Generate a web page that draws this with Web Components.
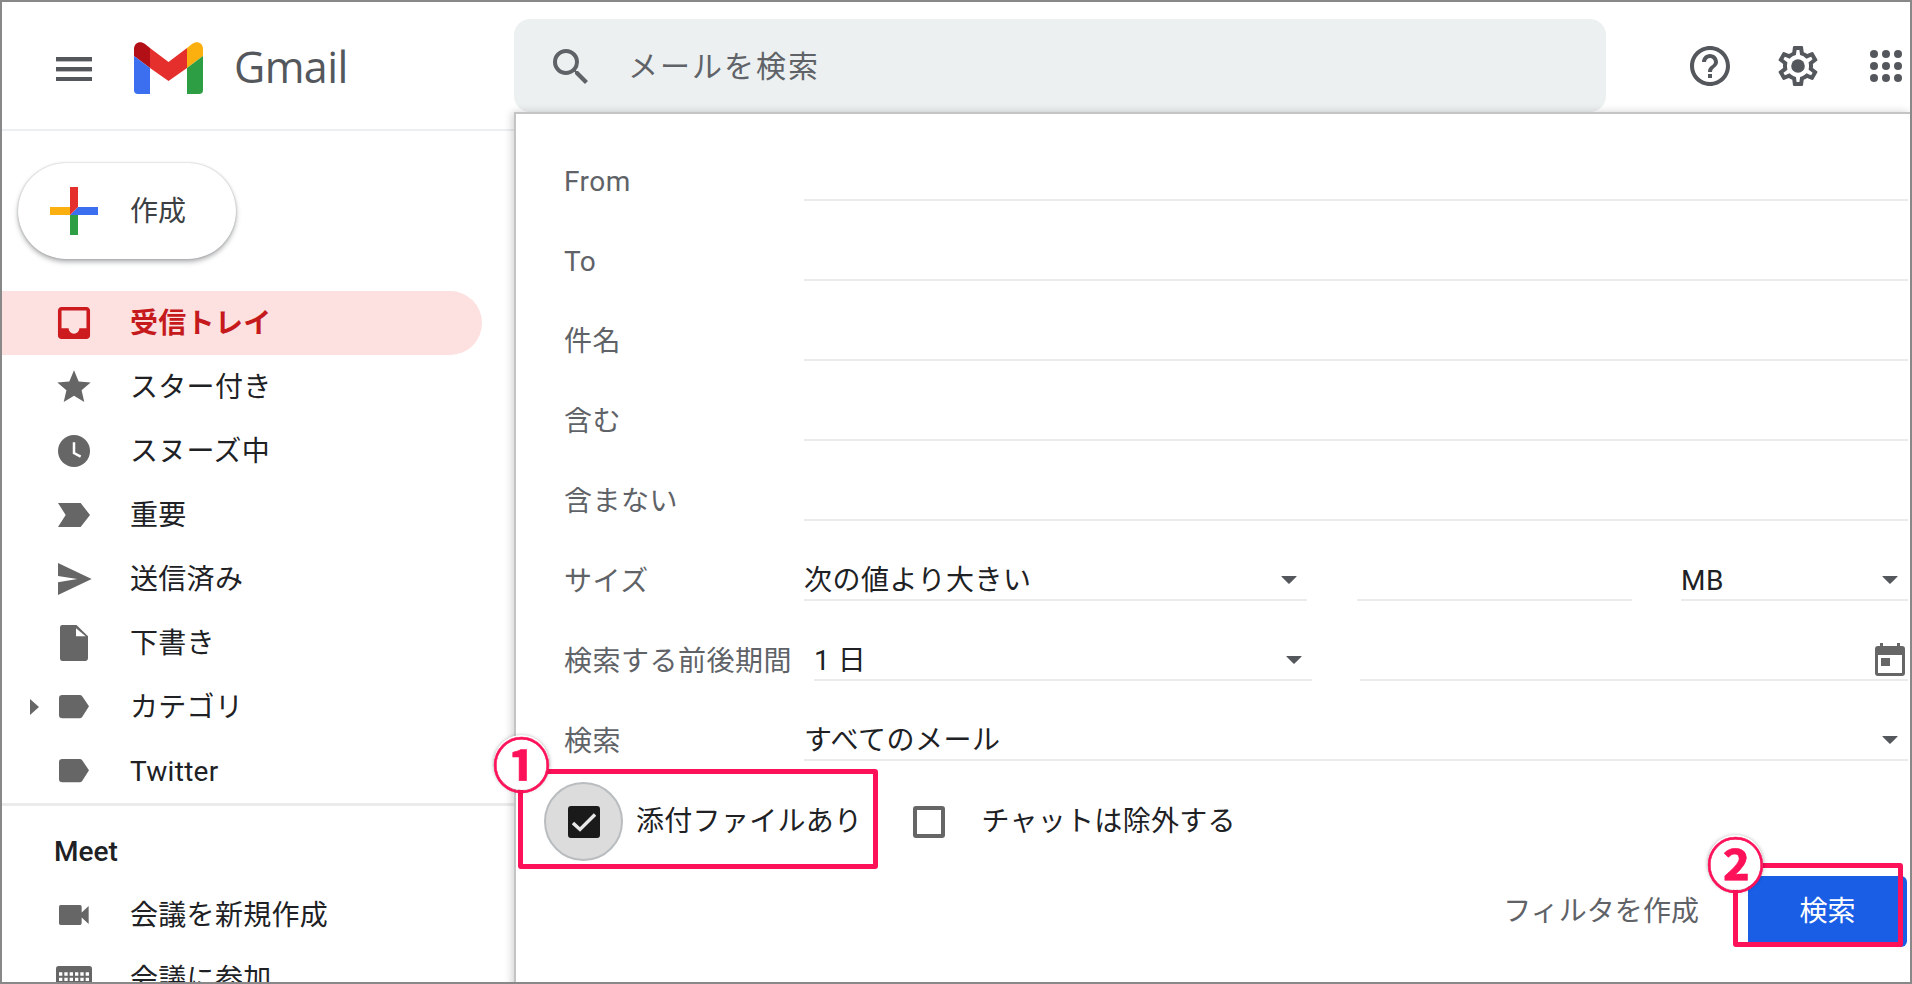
<!DOCTYPE html>
<html lang="ja">
<head>
<meta charset="utf-8">
<title>Gmail</title>
<style>
  html, body { margin: 0; height: 100%; overflow: hidden; background: #fff; }
</style>
</head>
<body>
<gm-app>
  <gm-sidebar slot="side">
    <gm-brand></gm-brand>
    <gm-compose>作成</gm-compose>
    <gm-nav-item icon="inbox" active>受信トレイ</gm-nav-item>
    <gm-nav-item icon="star">スター付き</gm-nav-item>
    <gm-nav-item icon="clock">スヌーズ中</gm-nav-item>
    <gm-nav-item icon="important">重要</gm-nav-item>
    <gm-nav-item icon="sent">送信済み</gm-nav-item>
    <gm-nav-item icon="draft">下書き</gm-nav-item>
    <gm-nav-item icon="label" caret>カテゴリ</gm-nav-item>
    <gm-nav-item icon="label">Twitter</gm-nav-item>
    <gm-meet-head>Meet</gm-meet-head>
    <gm-nav-item icon="video">会議を新規作成</gm-nav-item>
    <gm-nav-item icon="keyboard">会議に参加</gm-nav-item>
  </gm-sidebar>
  <gm-topbar slot="top"></gm-topbar>
  <gm-search-dialog slot="top">
    <gm-row label="From"><gm-field></gm-field></gm-row>
    <gm-row label="To"><gm-field></gm-field></gm-row>
    <gm-row label="件名"><gm-field></gm-field></gm-row>
    <gm-row label="含む"><gm-field></gm-field></gm-row>
    <gm-row label="含まない"><gm-field></gm-field></gm-row>
    <gm-row label="サイズ">
      <gm-field select style="width:503px">次の値より大きい</gm-field>
      <gm-field style="width:275px;margin-left:50px"></gm-field>
      <gm-field select style="width:227px;margin-left:49px">MB</gm-field>
    </gm-row>
    <gm-row label="検索する前後期間">
      <gm-field select style="width:498px;margin-left:10px">1 日</gm-field>
      <gm-field calendar style="width:548px;margin-left:48px"></gm-field>
    </gm-row>
    <gm-row label="検索"><gm-field select>すべてのメール</gm-field></gm-row>
    <gm-check-row>
      <gm-check checked>添付ファイルあり</gm-check>
      <gm-check style="margin-left:51px">チャットは除外する</gm-check>
    </gm-check-row>
    <gm-actions></gm-actions>
  </gm-search-dialog>
  <gm-mark slot="over" style="left:516px;top:767px;width:360px;height:100px"></gm-mark>
  <gm-badge slot="over" style="left:492px;top:733px">①</gm-badge>
  <gm-mark slot="over" style="left:1731px;top:861px;width:170px;height:84px"></gm-mark>
  <gm-badge slot="over" style="left:1706px;top:833px">②</gm-badge>
</gm-app>

<script>
"use strict";

(() => {
  const ICONS = {
    inbox: `<path transform="translate(12 12) scale(1.07) translate(-12 -12)" d="M19 3H5c-1.1 0-2 .9-2 2v14c0 1.1.9 2 2 2h14c1.1 0 2-.9 2-2V5c0-1.1-.9-2-2-2zm0 12h-4c0 1.66-1.35 3-3 3s-3-1.34-3-3H5V5h14v10z"/>`,
    star: `<path d="M12 17.27L18.18 21l-1.64-7.03L22 9.24l-7.19-.61L12 2 9.19 8.63 2 9.24l5.46 4.73L5.82 21z"/>`,
    clock: `<circle cx="12" cy="12" r="9.6"/><path d="M12 6.8v6.4l4 2.2" fill="none" stroke="#fff" stroke-width="1.5"/>`,
    important: `<path d="M2.4 4.8H16L21.6 12 16 19.2H2.4L7 12z"/>`,
    sent: `<path d="M2.4 2.4L22.6 12 2.4 21.6v-7.6L14 12 2.4 10.2z"/>`,
    draft: `<path d="M5 1.2h8.5L20.4 8v13.2c0 .9-.7 1.6-1.6 1.6H5c-.9 0-1.4-.7-1.4-1.6V2.8c0-.9.5-1.6 1.4-1.6z"/><path d="M13.2 3.2L19 8h-5.8z" fill="#fff"/>`,
    label: `<path d="M5 4.8h10.5q.8 0 1.3.6l4.2 6.2-4.2 6.6q-.5.6-1.3.6H5q-2 0-2-2V6.8q0-2 2-2z"/>`,
    video: `<path d="M4 6h11.6a1 1 0 0 1 1 1v3.5l4.2-3.9v10.8l-4.2-3.9V17a1 1 0 0 1-1 1H4a1 1 0 0 1-1-1V7a1 1 0 0 1 1-1z"/>`,
    keyboard: `<rect x="1.2" y="4.2" width="21.6" height="15.6" rx="1.6"/><path fill="#fff" d="M3 8h2v2H3zM6.2 8h2v2h-2zM9.4 8h2v2h-2zM12.6 8h2v2h-2zM15.8 8h2v2h-2zM19 8h2v2h-2zM3 11.2h2v2H3zM6.2 11.2h2v2h-2zM9.4 11.2h2v2h-2zM12.6 11.2h2v2h-2zM15.8 11.2h2v2h-2zM19 11.2h2v2h-2zM7 15h10v2H7z"/>`,
  };

  customElements.define("gm-app", class extends HTMLElement {
    constructor() {
      super();
      this.attachShadow({mode: "open"}).innerHTML = `
        <style>
          :host {
            display: grid;
            grid-template-columns: 512px 1fr;
            position: relative;
            box-sizing: border-box;
            width: 1912px;
            height: 984px;
            border: 2px solid #888;
            overflow: hidden;
            background: #fff;
            color: #202124;
            font-family: Roboto, "Noto Sans CJK JP", sans-serif;
            font-size: 28px;
            line-height: 36px;
          }
          #side, #main { min-width: 0; display: flex; flex-direction: column; }
        </style>
        <div id="side"><slot name="side"></slot></div>
        <div id="main"><slot name="top"></slot></div>
        <slot name="over"></slot>
      `;
    }
  });

  customElements.define("gm-sidebar", class extends HTMLElement {
    constructor() {
      super();
      this.attachShadow({mode: "open"}).innerHTML = `
        <style>
          :host { display: block; height: 100%; overflow: hidden; }
        </style>
        <slot></slot>
      `;
    }
  });

  customElements.define("gm-brand", class extends HTMLElement {
    constructor() {
      super();
      this.attachShadow({mode: "open"}).innerHTML = `
        <style>
          :host {
            display: flex;
            align-items: center;
            height: 127px;
            border-bottom: 2px solid #eceff1;
            padding-left: 54px;
          }
          #menu { width: 36px; height: 24px; margin-right: 42px; margin-top: 6px; display: block; }
          #logo { width: 69px; height: 52px; margin-right: 31px; margin-top: 5px; display: block; }
          #name {
            color: #54575c;
            font-family: "Open Sans", sans-serif;
            font-size: 43px;
            letter-spacing: -.6px;
            line-height: 52px;
            margin-top: 3px;
          }
        </style>
        <svg id="menu" viewBox="0 0 36 24" fill="#54575c">
          <rect width="36" height="4.4"/><rect y="10" width="36" height="4.4"/><rect y="20" width="36" height="4.4"/>
        </svg>
        <svg id="logo" viewBox="0 0 69 52">
          <path fill="#e52f2c" d="M16 6l18.5 14L53 6v20L34.5 39 16 26z"/>
          <path fill="#b30f17" d="M16 6v20L0 14V7C0 1 6-2 11 2z"/>
          <path fill="#fbb010" d="M53 6v20l16-12V7c0-6-6-9-11-5z"/>
          <path fill="#3b6ff0" d="M0 14l16 12v26H4q-4 0-4-4z"/>
          <path fill="#2e9e45" d="M69 14L53 26v26h12q4 0 4-4z"/>
        </svg>
        <span id="name">Gmail</span>
      `;
    }
  });

  customElements.define("gm-compose", class extends HTMLElement {
    constructor() {
      super();
      this.attachShadow({mode: "open"}).innerHTML = `
        <style>
          :host {
            display: flex;
            align-items: center;
            box-sizing: border-box;
            width: 218px;
            height: 96px;
            margin: 32px 0 32px 16px;
            padding-left: 32px;
            border-radius: 48px;
            background: #fff;
            box-shadow: 0 0 2px rgba(60,64,67,.35), 0 3px 5px rgba(60,64,67,.4);
            color: #3c4043;
          }
          svg { width: 48px; height: 48px; margin-right: 32px; display: block; }
          span { padding-top: 2px; }
        </style>
        <svg viewBox="0 0 48 48">
          <path fill="#fbb010" d="M0 20h20v8H0z"/>
          <path fill="#2e9e45" d="M20 28h8v20h-8z"/>
          <path fill="#3b6ff0" d="M28 20h20v8H20z"/>
          <path fill="#e52f2c" d="M20 0h8v20l-8 8z"/>
        </svg>
        <span><slot></slot></span>
      `;
    }
  });

  customElements.define("gm-nav-item", class extends HTMLElement {
    constructor() {
      super();
      this.attachShadow({mode: "open"}).innerHTML = `
        <style>
          :host {
            display: flex;
            align-items: center;
            box-sizing: border-box;
            width: 480px;
            height: 64px;
            padding-left: 28px;
            border-radius: 0 32px 32px 0;
            letter-spacing: .3px;
            flex: none;
          }
          :host([active]) { background: #fde0e0; color: #c5191c; font-weight: 700; }
          #caret { width: 24px; height: 16px; flex: none; display: block; }
          #icon { width: 40px; height: 40px; margin-right: 36px; flex: none; display: block; fill: #666; }
          :host([active]) #icon { fill: #cc1a1e; }
          #text { padding-top: 2px; }
        </style>
        <svg id="caret" viewBox="0 0 24 16"></svg>
        <svg id="icon" viewBox="0 0 24 24"></svg>
        <span id="text"><slot></slot></span>
      `;
    }

    connectedCallback() {
      this.shadowRoot.getElementById("icon").innerHTML = ICONS[this.getAttribute("icon")] || "";
      if (this.hasAttribute("caret")) {
        this.shadowRoot.getElementById("caret").innerHTML = `<path fill="#666" d="M0 0l9 8-9 8z"/>`;
      }
    }
  });

  customElements.define("gm-meet-head", class extends HTMLElement {
    constructor() {
      super();
      this.attachShadow({mode: "open"}).innerHTML = `
        <style>
          :host {
            display: flex;
            align-items: center;
            height: 63px;
            padding: 14px 0 0 52px;
            border-top: 3px solid #ebebeb;
            font-weight: 500;
            font-size: 28px;
          }
        </style>
        <slot></slot>
      `;
    }
  });

  customElements.define("gm-topbar", class extends HTMLElement {
    constructor() {
      super();
      this.attachShadow({mode: "open"}).innerHTML = `
        <style>
          :host {
            display: flex;
            align-items: flex-start;
            height: 110px;
            box-sizing: border-box;
            padding-top: 17px;
            flex: none;
          }
          #box {
            display: flex;
            align-items: center;
            box-sizing: border-box;
            width: 1092px;
            height: 93px;
            padding: 2px 0 0 33px;
            border-radius: 16px;
            background: #ecf0f1;
            color: #5f6368;
            font-size: 30px;
            letter-spacing: 2px;
          }
          #box svg { width: 48px; height: 48px; fill: #5f6368; margin-right: 33px; display: block; }
          #icons { display: flex; gap: 40px; margin: 23px 0 0 80px; }
          #icons svg { width: 48px; height: 48px; fill: #54575c; display: block; }
        </style>
        <div id="box">
          <svg viewBox="0 0 24 24"><path d="M15.5 14h-.79l-.28-.27A6.47 6.47 0 0 0 16 9.5 6.5 6.5 0 1 0 9.5 16c1.61 0 3.09-.59 4.23-1.57l.27.28v.79l5 4.99L20.49 19l-4.99-5zm-6 0C7.01 14 5 11.99 5 9.5S7.01 5 9.5 5 14 7.01 14 9.5 11.99 14 9.5 14z"/></svg>
          <span>メールを検索</span>
        </div>
        <div id="icons">
          <svg viewBox="0 0 24 24"><path d="M11 18h2v-2h-2v2zm1-16C6.48 2 2 6.48 2 12s4.48 10 10 10 10-4.48 10-10S17.52 2 12 2zm0 18c-4.41 0-8-3.59-8-8s3.59-8 8-8 8 3.59 8 8-3.59 8-8 8zm0-14c-2.21 0-4 1.79-4 4h2c0-1.1.9-2 2-2s2 .9 2 2c0 2-3 1.75-3 5h2c0-2.25 3-2.5 3-5 0-2.21-1.79-4-4-4z"/></svg>
          <svg viewBox="0 0 24 24"><path d="M19.43 12.98c.04-.32.07-.64.07-.98 0-.34-.03-.66-.07-.98l2.11-1.65c.19-.15.24-.42.12-.64l-2-3.46c-.09-.16-.26-.25-.44-.25-.06 0-.12.01-.17.03l-2.49 1c-.52-.4-1.08-.73-1.69-.98l-.38-2.65C14.46 2.18 14.25 2 14 2h-4c-.25 0-.46.18-.49.42l-.38 2.65c-.61.25-1.17.59-1.69.98l-2.49-1c-.06-.02-.12-.03-.18-.03-.17 0-.34.09-.43.25l-2 3.46c-.13.22-.07.49.12.64l2.11 1.65c-.04.32-.07.65-.07.98 0 .33.03.66.07.98l-2.11 1.65c-.19.15-.24.42-.12.64l2 3.46c.09.16.26.25.44.25.06 0 .12-.01.17-.03l2.49-1c.52.4 1.08.73 1.69.98l.38 2.65c.03.24.24.42.49.42h4c.25 0 .46-.18.49-.42l.38-2.65c.61-.25 1.17-.59 1.69-.98l2.49 1c.06.02.12.03.18.03.17 0 .34-.09.43-.25l2-3.46c.12-.22.07-.49-.12-.64l-2.11-1.65zm-1.98-1.71c.04.31.05.52.05.73 0 .21-.02.43-.05.73l-.14 1.13.89.7 1.08.84-.7 1.21-1.27-.51-1.04-.42-.9.68c-.43.32-.84.56-1.25.73l-1.06.43-.16 1.13-.2 1.35h-1.4l-.19-1.35-.16-1.13-1.06-.43c-.43-.18-.83-.41-1.23-.71l-.91-.7-1.06.43-1.27.51-.7-1.21 1.08-.84.89-.7-.14-1.13c-.03-.31-.05-.54-.05-.74s.02-.43.05-.73l.14-1.13-.89-.7-1.08-.84.7-1.21 1.27.51 1.04.42.9-.68c.43-.32.84-.56 1.25-.73l1.06-.43.16-1.13.2-1.35h1.39l.19 1.35.16 1.13 1.06.43c.43.18.83.41 1.23.71l.91.7 1.06-.43 1.27-.51.7 1.21-1.07.85-.89.7.14 1.13z"/><circle cx="12" cy="12" r="3.4"/></svg>
          <svg viewBox="0 0 24 24"><circle cx="6" cy="6" r="2"/><circle cx="12" cy="6" r="2"/><circle cx="18" cy="6" r="2"/><circle cx="6" cy="12" r="2"/><circle cx="12" cy="12" r="2"/><circle cx="18" cy="12" r="2"/><circle cx="6" cy="18" r="2"/><circle cx="12" cy="18" r="2"/><circle cx="18" cy="18" r="2"/></svg>
        </div>
      `;
    }
  });

  customElements.define("gm-search-dialog", class extends HTMLElement {
    constructor() {
      super();
      this.attachShadow({mode: "open"}).innerHTML = `
        <style>
          :host {
            display: block;
            flex: 1;
            box-sizing: border-box;
            padding: 7px 2px 0 0;
            border-top: 2px solid #c4c4c4;
            border-left: 2px solid #c4c4c4;
            background: #fff;
            box-shadow: -2px 0 8px rgba(0,0,0,.18);
            position: relative;
          }
        </style>
        <slot></slot>
      `;
    }
  });

  customElements.define("gm-row", class extends HTMLElement {
    constructor() {
      super();
      this.attachShadow({mode: "open"}).innerHTML = `
        <style>
          :host {
            display: flex;
            align-items: flex-end;
            height: 80px;
            box-sizing: border-box;
            padding-left: 48px;
          }
          #label {
            width: 240px;
            flex: none;
            color: #5f6368;
            letter-spacing: .5px;
            white-space: nowrap;
            padding-bottom: 1px;
          }
          #fields { flex: 1; display: flex; align-items: flex-end; min-width: 0; }
        </style>
        <div id="label"></div>
        <div id="fields"><slot></slot></div>
      `;
    }

    connectedCallback() {
      this.shadowRoot.getElementById("label").textContent = this.getAttribute("label");
    }
  });

  customElements.define("gm-field", class extends HTMLElement {
    constructor() {
      super();
      this.attachShadow({mode: "open"}).innerHTML = `
        <style>
          :host {
            display: flex;
            align-items: center;
            flex: 1 1 auto;
            box-sizing: border-box;
            height: 38px;
            border-bottom: 2px solid #ebebeb;
            white-space: nowrap;
            letter-spacing: .5px;
          }
          :host([style*="width"]) { flex: none; }
          #text { flex: 1; }
          #arrow { width: 16px; height: 8px; margin: 0 10px 2px 0; display: none; fill: #54575c; }
          :host([select]) #arrow { display: block; }
          #cal { width: 30px; height: 33px; margin: 0 3px 3px 0; align-self: flex-end; display: none; }
          :host([calendar]) #cal { display: block; }
        </style>
        <span id="text"><slot></slot></span>
        <svg id="arrow" viewBox="0 0 16 8"><path d="M1 0h14q1 0 .4.7L8.6 7.6q-.6.5-1.2 0L.6.7Q0 0 1 0z"/></svg>
        <svg id="cal" viewBox="0 0 30 33">
          <path fill="#666" d="M5 0h3v3h14V0h3v3h2q3 0 3 3v24q0 3-3 3H3q-3 0-3-3V6q0-3 3-3h2zM3 12v18h24V12z"/>
          <rect fill="#666" x="6" y="15" width="9" height="8"/>
        </svg>
      `;
    }
  });

  customElements.define("gm-check-row", class extends HTMLElement {
    constructor() {
      super();
      this.attachShadow({mode: "open"}).innerHTML = `
        <style>
          :host {
            display: flex;
            align-items: center;
            height: 79px;
            margin-top: 21px;
            padding-left: 28px;
          }
        </style>
        <slot></slot>
      `;
    }
  });

  customElements.define("gm-check", class extends HTMLElement {
    constructor() {
      super();
      this.attachShadow({mode: "open"}).innerHTML = `
        <style>
          :host { display: flex; align-items: center; white-space: nowrap; letter-spacing: .3px; }
          #ripple {
            display: flex;
            align-items: center;
            justify-content: center;
            box-sizing: border-box;
          }
          :host([checked]) #ripple {
            width: 79px;
            height: 79px;
            margin-right: 13px;
            border: 2px solid #b9bdc0;
            border-radius: 50%;
            background: #dcdcdc;
          }
          :host(:not([checked])) #ripple { margin-right: 36px; }
          #box {
            box-sizing: border-box;
            width: 32px;
            height: 32px;
            border: 4px solid #666;
            border-radius: 3px;
            display: block;
          }
          :host([checked]) #box { background: #1a1a1a; border-color: #1a1a1a; }
          svg { width: 24px; height: 24px; display: none; }
          :host([checked]) svg { display: block; }
        </style>
        <div id="ripple"><div id="box"><svg viewBox="0 0 24 24"><path d="M1 13l7 6.5L23 4.5" fill="none" stroke="#e8e8e8" stroke-width="3.4"/></svg></div></div>
        <slot></slot>
      `;
    }
  });

  customElements.define("gm-actions", class extends HTMLElement {
    constructor() {
      super();
      this.attachShadow({mode: "open"}).innerHTML = `
        <style>
          :host {
            display: flex;
            align-items: center;
            justify-content: flex-end;
            margin-top: 15px;
            padding-right: 1px;
          }
          #filter { color: #5f6368; letter-spacing: .05px; margin-right: 49px; }
          #go {
            display: flex;
            align-items: center;
            justify-content: center;
            width: 159px;
            height: 71px;
            border-radius: 6px;
            background: #1a5ee5;
            color: #fff;
          }
        </style>
        <span id="filter">フィルタを作成</span>
        <div id="go">検索</div>
      `;
    }
  });

  customElements.define("gm-mark", class extends HTMLElement {
    constructor() {
      super();
      this.attachShadow({mode: "open"}).innerHTML = `
        <style>
          :host {
            position: absolute;
            box-sizing: border-box;
            border: 5px solid #fd1159;
            border-radius: 3px;
          }
        </style>
      `;
    }
  });

  customElements.define("gm-badge", class extends HTMLElement {
    constructor() {
      super();
      this.attachShadow({mode: "open"}).innerHTML = `
        <style>
          :host {
            position: absolute;
            display: flex;
            align-items: center;
            justify-content: center;
            width: 55px;
            height: 55px;
            border-radius: 50%;
            background: #fff;
            box-shadow: 0 1px 4px rgba(0,0,0,.4);
            color: #fd1159;
            font-family: "Noto Sans CJK JP", sans-serif;
            font-weight: 700;
            font-size: 58px;
            line-height: 55px;
            -webkit-text-stroke: .6px #fd1159;
          }
        </style>
        <slot></slot>
      `;
    }
  });
})();
</script>
</body>
</html>
